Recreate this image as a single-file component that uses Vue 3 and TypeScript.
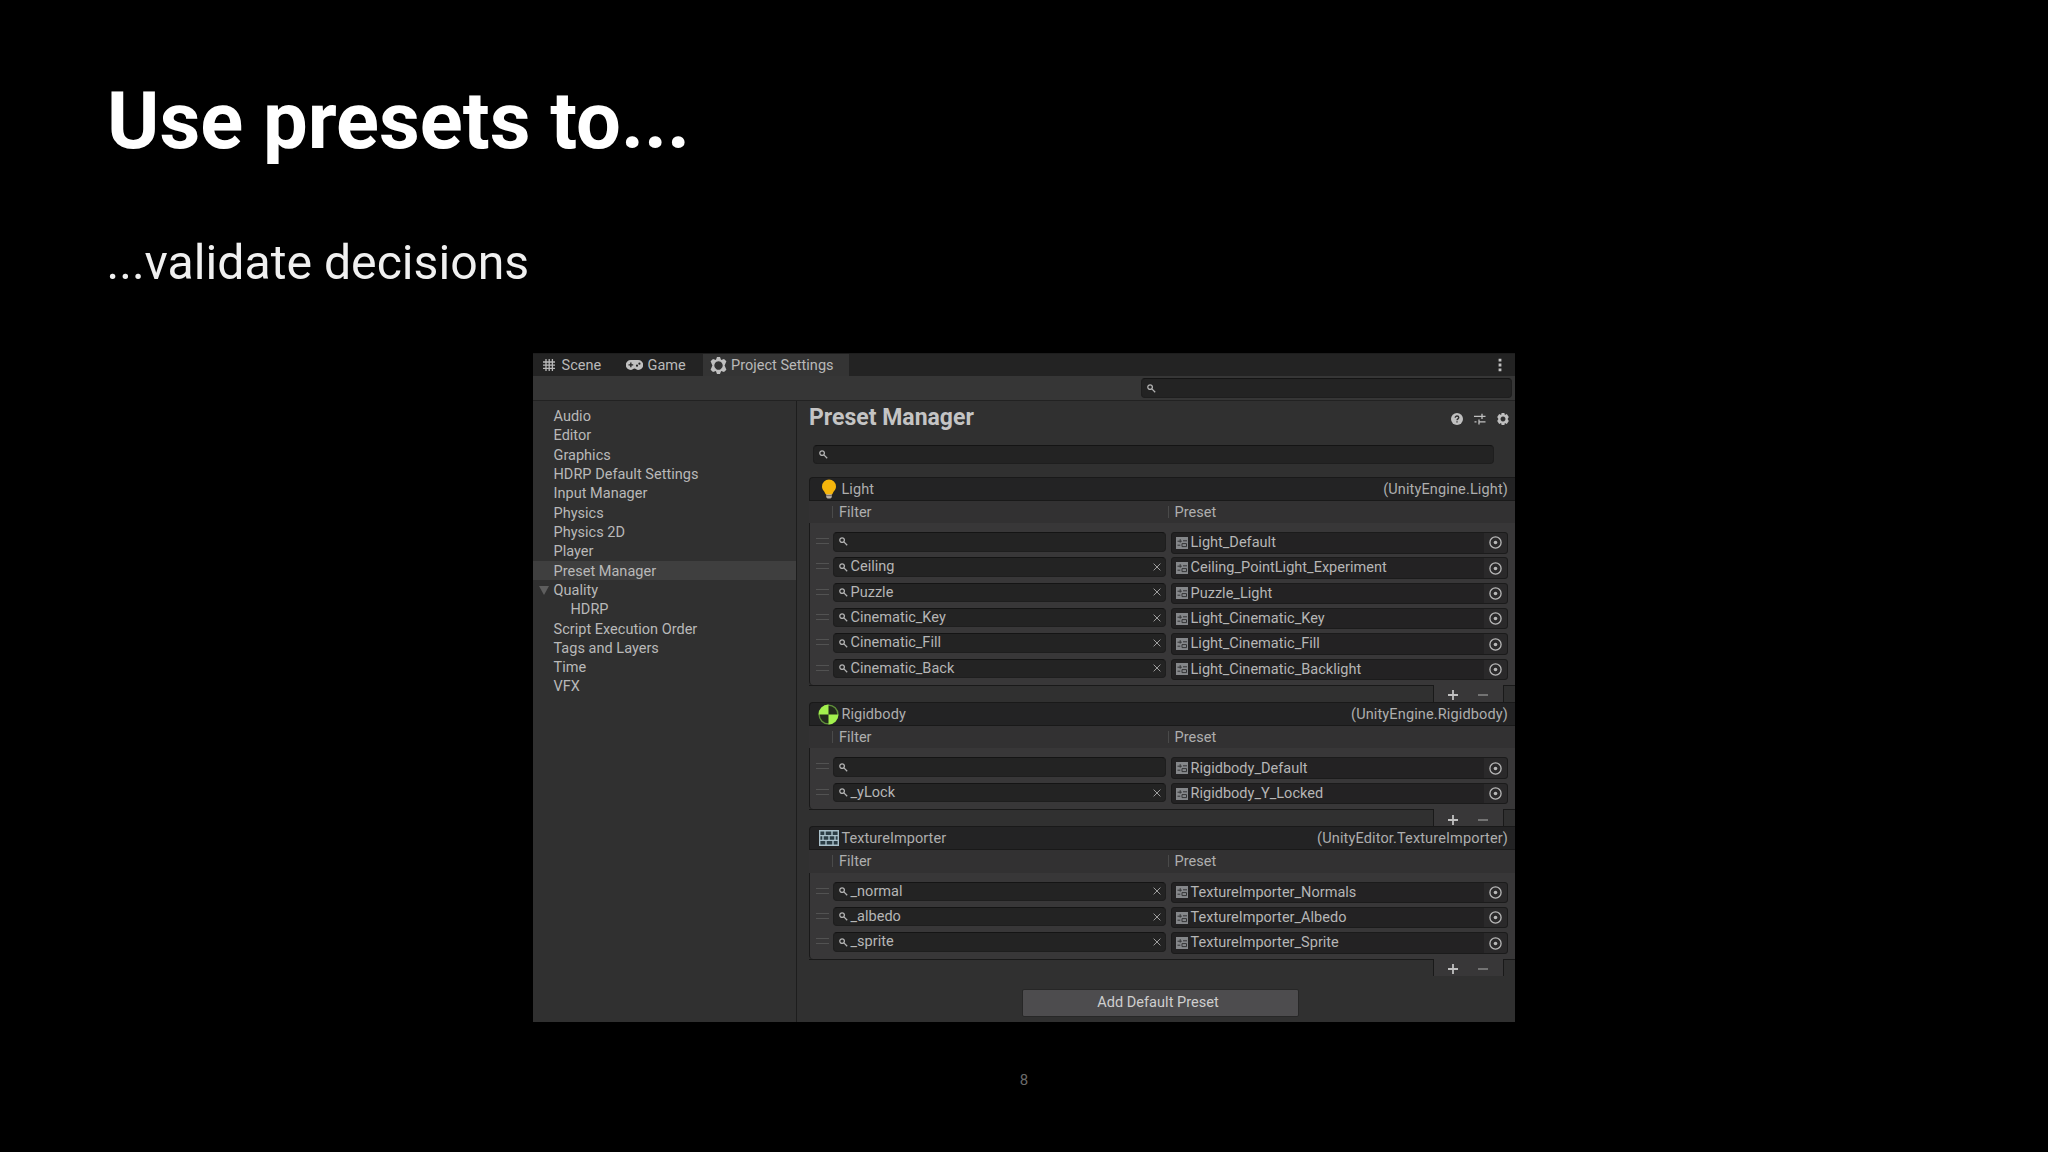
<script setup lang="ts">
interface NavItem { label: string; child?: boolean; open?: boolean; active?: boolean }
interface PresetRow { filter: string; preset: string }
interface PresetGroup { icon: 'light' | 'body' | 'texture'; name: string; type: string; rows: PresetRow[] }

const nav: NavItem[] = [
  { label: 'Audio' },
  { label: 'Editor' },
  { label: 'Graphics' },
  { label: 'HDRP Default Settings' },
  { label: 'Input Manager' },
  { label: 'Physics' },
  { label: 'Physics 2D' },
  { label: 'Player' },
  { label: 'Preset Manager', active: true },
  { label: 'Quality', open: true },
  { label: 'HDRP', child: true },
  { label: 'Script Execution Order' },
  { label: 'Tags and Layers' },
  { label: 'Time' },
  { label: 'VFX' },
]

const groups: PresetGroup[] = [
  {
    icon: 'light', name: 'Light', type: '(UnityEngine.Light)',
    rows: [
      { filter: '', preset: 'Light_Default' },
      { filter: 'Ceiling', preset: 'Ceiling_PointLight_Experiment' },
      { filter: 'Puzzle', preset: 'Puzzle_Light' },
      { filter: 'Cinematic_Key', preset: 'Light_Cinematic_Key' },
      { filter: 'Cinematic_Fill', preset: 'Light_Cinematic_Fill' },
      { filter: 'Cinematic_Back', preset: 'Light_Cinematic_Backlight' },
    ],
  },
  {
    icon: 'body', name: 'Rigidbody', type: '(UnityEngine.Rigidbody)',
    rows: [
      { filter: '', preset: 'Rigidbody_Default' },
      { filter: '_yLock', preset: 'Rigidbody_Y_Locked' },
    ],
  },
  {
    icon: 'texture', name: 'TextureImporter', type: '(UnityEditor.TextureImporter)',
    rows: [
      { filter: '_normal', preset: 'TextureImporter_Normals' },
      { filter: '_albedo', preset: 'TextureImporter_Albedo' },
      { filter: '_sprite', preset: 'TextureImporter_Sprite' },
    ],
  },
]
</script>

<template>
  <main class="slide">
    <h1 class="title">Use presets to...</h1>
    <p class="subtitle">...validate decisions</p>

    <section class="window">
      <div class="tabs">
        <div class="tab tab-scene">
          <svg class="i-grid" viewBox="0 0 12 12"><path d="M3 0v12M6.200 0v12M9.400 0v12M0 3h12M0 6.200h12M0 9.400h12" /></svg>
          <span>Scene</span>
        </div>
        <div class="tab tab-game">
          <svg class="i-pad" viewBox="0 0 17 10"><path fill-rule="evenodd" d="M4.800 0h7.400a4.800 4.800 0 0 1 0 10c-1.800 0-2.300-1.400-3.700-1.400S6.600 10 4.800 10a4.800 4.800 0 0 1 0-10zM4.200 2.600v1.700H2.500v1.300h1.700v1.700h1.300V5.600h1.700V4.300H5.500V2.600zM11 4.600a1.100 1.100 0 1 0 .01 2.200a1.100 1.100 0 1 0-.01-2.200zM13.400 2.600a1.100 1.100 0 1 0 .01 2.200a1.100 1.100 0 1 0-.01-2.200z" /></svg>
          <span>Game</span>
        </div>
        <div class="tab tab-settings">
          <svg class="i-gear" viewBox="-8.500 -8.500 17 17"><path fill-rule="evenodd" d="M-1.500-8.400h3L2.600-5.600 5.500-6.400 7.900-4.200 6.100 0 7.900 4.200 5.500 6.400 2.600 5.600 1.500 8.400h-3L-2.600 5.600-5.500 6.400-7.900 4.200-6.100 0-7.900-4.200-5.500-6.400-2.600-5.600zM0-4.200a4.200 4.200 0 1 0 .01 0z" /></svg>
          <span>Project Settings</span>
        </div>
        <svg class="i-dots" viewBox="0 0 4 14"><path d="M.6.800h2.800v2.800H.6zM.6 5.600h2.800v2.800H.6zM.6 10.400h2.800v2.800H.6z" /></svg>
      </div>

      <div class="toolbar">
        <div class="search search-top">
          <svg class="i-mag" viewBox="0 0 9 9"><circle cx="3.100" cy="3.100" r="2.300" /><path d="M4.900 4.900 8.200 8.200" /></svg>
        </div>
      </div>

      <div class="content">
        <nav class="sidebar">
          <div v-for="n in nav" :key="n.label" class="nav-item" :class="{ child: n.child, active: n.active }">
            <svg v-if="n.open" class="i-fold" viewBox="0 0 10 9"><path d="M0 0h10L5 9z" /></svg>
            <span>{{ n.label }}</span>
          </div>
        </nav>

        <div class="pane">
          <header class="pane-head">
            <h2>Preset Manager</h2>
            <div class="actions">
              <svg class="i-help" viewBox="0 0 12 12"><circle cx="6" cy="6" r="6" /><path d="M4.200 4.700C4.200 2.400 7.800 2.500 7.800 4.600 7.800 5.900 6 5.900 6 7.300M6 8.300v1.300" /></svg>
              <svg class="i-sliders" viewBox="0 0 12 12"><path d="M0 3.400h8.500M8 .8v5.200M8.500 3.400H11.500M.5 8.900h2M5 6.400v5.200M5 8.900h6.500" /></svg>
              <svg class="i-cog" viewBox="-6 -6 12 12"><path fill-rule="evenodd" d="M-1.400-6h2.800L1.900-4.100 3.800-4.900 5.800-2 4.600 0 5.800 2 3.800 4.900 1.900 4.100 1.400 6h-2.800L-1.900 4.100-3.800 4.900-5.800 2-4.600 0-5.800-2-3.800-4.900-1.900-4.100zM0-2.500a2.500 2.500 0 1 0 .01 0z" /></svg>
            </div>
          </header>
          <div class="search search-main">
            <svg class="i-mag" viewBox="0 0 9 9"><circle cx="3.100" cy="3.100" r="2.300" /><path d="M4.900 4.900 8.200 8.200" /></svg>
          </div>

          <section v-for="g in groups" :key="g.name" class="group">
            <div class="group-head">
              <span class="type-icon">
                <svg v-if="g.icon === 'light'" width="16" height="20" viewBox="0 0 16 20"><path fill="#b9b0a4" d="M5.200 14h5.600v4.200L9.500 19.400h-3L5.200 18.200z" /><path stroke="#5c5650" stroke-width=".8" d="M5.200 16.600h5.600" /><path fill="#f5b50c" d="M8 .5a7 7 0 0 1 7 7c0 3.400-2.700 4.700-3.600 7.700H4.600C3.700 12.200 1 10.900 1 7.500a7 7 0 0 1 7-7z" /></svg>
                <svg v-else-if="g.icon === 'body'" width="21" height="21" viewBox="0 0 21 21"><circle cx="10.500" cy="10.500" r="9.400" fill="#222a1c" stroke="#5f8f3a" stroke-width="1.400" /><path fill="#a2f04e" d="M10.500 10.500V.6A9.900 9.900 0 0 0 .6 10.500zM10.500 10.500v9.900a9.900 9.900 0 0 0 9.900-9.900z" /></svg>
                <svg v-else width="20" height="16" viewBox="0 0 20 16"><path fill="#2b3d45" stroke="#a9c0ca" stroke-width="1.400" d="M.7.700h18.600v14.600H.7zM.7 5.600h18.600M.7 10.400h18.600M6 .7v4.900M13 .7v4.900M4 5.600v4.800M10 5.600v4.800M16 5.600v4.800M7 10.400v4.900M14 10.400v4.900" /></svg>
              </span>
              <span class="group-name">{{ g.name }}</span>
              <span class="group-type">{{ g.type }}</span>
            </div>
            <div class="columns">
              <span class="col col-filter">Filter</span>
              <span class="col col-preset">Preset</span>
            </div>
            <div class="rows">
              <div v-for="r in g.rows" :key="r.preset" class="row">
                <i class="handle" />
                <div class="search filter">
                  <svg class="i-mag" viewBox="0 0 9 9"><circle cx="3.100" cy="3.100" r="2.300" /><path d="M4.900 4.900 8.200 8.200" /></svg>
                  <span>{{ r.filter }}</span>
                  <svg v-if="r.filter" class="i-x" viewBox="0 0 8 8"><path d="M.6.600 7.400 7.400M7.400.600.600 7.400" /></svg>
                </div>
                <div class="object">
                  <svg class="i-preset" viewBox="0 0 12 12"><path fill="#85878a" d="M0 0h12v12H0z" /><path fill="none" stroke="#343436" stroke-width="1" d="M1.500 4.200h4.300M4.200 2.200v3.400M7 3.800h4M1.500 8.200h2.800M6 6.600h4.500v3H6z" /></svg>
                  <span>{{ r.preset }}</span>
                  <div class="picker">
                    <svg class="i-target" viewBox="0 0 13 13"><circle cx="6.500" cy="6.500" r="5.600" /><circle class="dot" cx="6.500" cy="6.500" r="1.800" /></svg>
                  </div>
                </div>
              </div>
            </div>
            <div class="foot">
              <div class="foot-line" />
              <div class="foot-btns">
                <svg class="i-plus" viewBox="0 0 10 10"><path d="M5 0v10M0 5h10" /></svg>
                <i class="minus" />
              </div>
              <div class="foot-end" />
            </div>
          </section>

          <button class="add" type="button">Add Default Preset</button>
        </div>
      </div>
    </section>

    <div class="page">8</div>
  </main>
</template>

<style>
body { margin: 0; background: #000; }
</style>

<style scoped>
.slide { box-sizing: border-box; width: 2048px; height: 1152px; overflow: hidden; background: #000; color: #b9b9b9; font: 14.500px/19.330px Roboto, sans-serif; letter-spacing: .02px; display: flex; flex-direction: column; }
.slide * { box-sizing: border-box; }
svg { display: block; flex: none; }
.title { margin: 74px 0 0 107px; font-size: 79.500px; line-height: 94px; font-weight: 700; letter-spacing: 0; color: #fff; white-space: nowrap; }
.subtitle { margin: 65px 0 0 106.500px; font-size: 48.200px; line-height: 60px; letter-spacing: 0; color: #f0f0f0; white-space: nowrap; }

.window { margin: 60px 0 0 533px; width: 982px; height: 668.500px; flex: none; background: #303030; display: flex; flex-direction: column; overflow: hidden; }
.tabs { height: 23px; flex: none; display: flex; background: #232323; border-top: 1px solid #1d1d1d; }
.tab { display: flex; align-items: center; height: 22px; }
.tab span { position: relative; top: 1px; }
.tab-scene { width: 85px; padding-left: 10px; gap: 6.500px; }
.tab-game { width: 85px; padding-left: 7.500px; gap: 5px; }
.tab-settings { width: 146px; padding-left: 7px; gap: 4px; background: #343434; }
.i-grid { width: 12px; height: 12px; fill: none; stroke: #b9b9b9; stroke-width: 1.300; }
.i-pad { width: 17px; height: 10px; fill: #c0c0c0; }
.i-gear { width: 17px; height: 17px; fill: #c0c0c0; }
.i-dots { width: 4px; height: 14px; margin: 4px 13px 0 auto; fill: #c0c0c0; }
.toolbar { height: 25px; flex: none; background: #363636; border-bottom: 1px solid #222; display: flex; justify-content: flex-end; padding: 2px 3px 0 0; }
.search { display: flex; align-items: center; background: #232323; border: 1px solid #1e1e1e; border-top-color: #141414; border-radius: 4px; }
.search .i-mag { width: 9px; height: 9px; margin-left: 5px; fill: none; stroke: #b2b2b2; stroke-width: 1.300; }
.search-top { width: 371px; height: 20px; }
.content { flex: 1; display: flex; min-height: 0; }
.sidebar { width: 264px; flex: none; padding-top: 5.300px; border-right: 1px solid #1d1d1d; }
.nav-item { height: 19.330px; padding-left: 20.500px; white-space: nowrap; position: relative; }
.nav-item span { position: relative; top: .6px; }
.nav-item.child { padding-left: 37.500px; }
.nav-item.active { background: #3f3f3f; }
.i-fold { position: absolute; left: 6px; top: 6px; width: 10px; height: 9px; fill: #5e5e5e; }

.pane { flex: 1; min-width: 0; display: flex; flex-direction: column; }
.pane-head { height: 44px; flex: none; display: flex; justify-content: space-between; padding: 3px 6.500px 0 12px; }
.pane-head h2 { margin: 0; font-size: 23px; line-height: 28px; font-weight: 700; letter-spacing: 0; color: #c4c4c4; }
.actions { display: flex; gap: 11px; padding-top: 8.500px; }
.actions svg { width: 12px; height: 12px; }
.i-help circle { fill: #c0c0c0; }
.i-help path { fill: none; stroke: #303030; stroke-width: 1.300; }
.i-sliders { fill: none; stroke: #c0c0c0; stroke-width: 1.300; }
.i-cog { fill: #c0c0c0; }
.search-main { width: 681px; height: 19px; margin: 0 0 12.500px 16px; flex: none; }

.group { flex: none; margin-left: 12px; color: #aeaeae; }
.group-head { height: 24px; display: flex; align-items: center; background: #232324; border: 1px solid #191919; border-right: 0; border-radius: 4px 0 0 0; padding-right: 7px; }
.group-head span { position: relative; top: 1px; }
.group-head .type-icon { top: .3px; }
.type-icon { width: 21px; margin-left: 8px; display: flex; justify-content: center; }
.group-name { margin-left: 2.500px; letter-spacing: .06px; }
.group-type { margin-left: auto; letter-spacing: .14px; }
.columns { height: 22.500px; display: flex; align-items: flex-start; background: #323132; }
.col { padding-left: 7px; position: relative; top: 2px; }
.col::before { content: ''; position: absolute; left: 0; top: 3px; width: 1px; height: 12px; background: #4a4a4a; }
.col-filter { margin-left: 23px; width: 335.500px; }
.rows { background: #383738; border-left: 1px solid #191919; border-bottom: 0; border-radius: 0 0 0 4px; padding: 9px 7px 1px 6px; }
.row { height: 25.330px; display: flex; align-items: flex-start; }
.handle { width: 13px; height: 6px; margin: 6px 4px 0 0; border: solid #525252; border-width: 1px 0; }
.filter { width: 333px; height: 19.500px; margin-right: 5px; }
.filter span { margin-left: 2.500px; color: #b6b6b6; }
.i-x { width: 8px; height: 8px; margin: 0 4px 0 auto; fill: none; stroke: #9d9d9d; stroke-width: 1; }
.object { flex: 1; height: 21.500px; display: flex; align-items: center; background: #232223; border: 1px solid #1b1b1b; border-radius: 3px; }
.object span { margin-left: 2.500px; color: #b6b6b6; }
.i-preset { width: 12px; height: 12px; margin-left: 4px; }
.picker { margin-left: auto; width: 23px; align-self: stretch; background: #2a292a; display: flex; align-items: center; justify-content: center; border-radius: 0 3px 3px 0; }
.i-target { width: 13px; height: 13px; fill: none; stroke: #b8b8b8; stroke-width: 1.300; }
.i-target .dot { fill: #b8b8b8; stroke: none; }
.foot { height: 17px; display: flex; }
.foot-line { width: 625px; border: solid #191919; border-width: 1px 1px 0 0; border-radius: 0 0 0 3px; }
.foot-btns { width: 69px; background: #383738; display: flex; align-items: center; padding: 4px 0 0 14px; }
.i-plus { width: 10px; height: 10px; fill: none; stroke: #c0c0c0; stroke-width: 1.800; }
.minus { width: 10px; height: 2px; margin-left: 20px; background: #737373; }
.foot-end { flex: 1; border: solid #191919; border-width: 1px 0 0 1px; }
.add { width: 277px; height: 28px; margin: 13.500px 0 0 224.500px; padding: 0 4px 1px 0; flex: none; font: inherit; letter-spacing: .04px; color: #cfcfcf; background: #4d4c4e; border: 1px solid #272727; border-radius: 2px; }
.page { margin: 49px auto 0; font-size: 15px; line-height: 18px; color: #6b6b6b; }
</style>
